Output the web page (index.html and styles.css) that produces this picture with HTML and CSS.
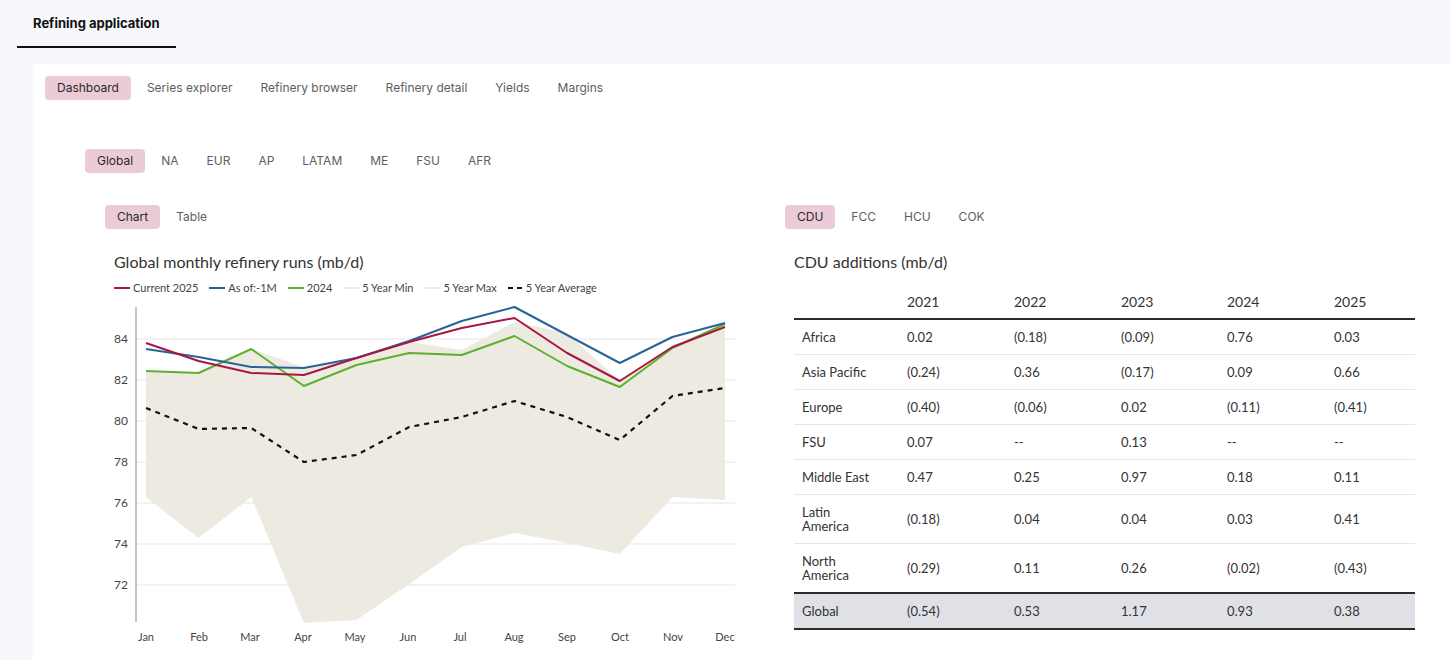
FILE: index.html
```html
<!DOCTYPE html>
<html>
<head>
  <meta charset="UTF-8">
  <title>Refining application</title>
  <link rel="stylesheet" href="styles.css">
</head>
<body>
  <div class="app-tabs">
    <div class="app-tab active">Refining application</div>
  </div>

  <div class="panel">
    <nav class="pills main-nav">
      <span class="pill active">Dashboard</span>
      <span class="pill">Series explorer</span>
      <span class="pill">Refinery browser</span>
      <span class="pill">Refinery detail</span>
      <span class="pill">Yields</span>
      <span class="pill">Margins</span>
    </nav>

    <nav class="pills region-nav">
      <span class="pill active">Global</span>
      <span class="pill">NA</span>
      <span class="pill">EUR</span>
      <span class="pill">AP</span>
      <span class="pill">LATAM</span>
      <span class="pill">ME</span>
      <span class="pill">FSU</span>
      <span class="pill">AFR</span>
    </nav>

    <div class="split">
      <section class="card">
        <nav class="pills">
          <span class="pill active">Chart</span>
          <span class="pill">Table</span>
        </nav>
        <h2 class="card-title">Global monthly refinery runs (mb/d)</h2>
        <div class="legend">
          <span class="key"><i class="swatch red"></i>Current 2025</span>
          <span class="key"><i class="swatch blue"></i>As of:-1M</span>
          <span class="key"><i class="swatch green"></i>2024</span>
          <span class="key"><i class="swatch beige"></i>5 Year Min</span>
          <span class="key"><i class="swatch beige"></i>5 Year Max</span>
          <span class="key"><i class="swatch dashed"></i>5 Year Average</span>
        </div>
        <svg class="chart" width="640" height="365" viewBox="105 295 640 365">
          <!-- grid -->
          <g class="grid">
            <line x1="136" x2="735" y1="339" y2="339"/>
            <line x1="136" x2="735" y1="380" y2="380"/>
            <line x1="136" x2="735" y1="421" y2="421"/>
            <line x1="136" x2="735" y1="462" y2="462"/>
            <line x1="136" x2="735" y1="503" y2="503"/>
            <line x1="136" x2="735" y1="544" y2="544"/>
            <line x1="136" x2="735" y1="585" y2="585"/>
          </g>
          <g class="y-labels">
            <text x="128" y="343">84</text>
            <text x="128" y="384">82</text>
            <text x="128" y="425">80</text>
            <text x="128" y="466">78</text>
            <text x="128" y="507">76</text>
            <text x="128" y="548">74</text>
            <text x="128" y="589">72</text>
          </g>

          <!-- 5 year min / max band -->
          <polygon class="band" points="146,371 198.6,372 251.3,349 303.9,367 356.5,358 409.2,342 461.8,350 514.5,322 567.1,333 619.8,381 672.4,347 725,323 725,500 672.4,497 619.8,554 567.1,543 514.5,533 461.8,547 409.2,584 356.5,620 303.9,623 251.3,497 198.6,538 146,497"/>

          <polyline class="series avg" points="146,408 198.6,429 251.3,428 303.9,462 356.5,455 409.2,427 461.8,417 514.5,401 567.1,417 619.8,440 672.4,396 725,388"/>
          <polyline class="series green" points="146,371 198.6,373 251.3,349 303.9,386 356.5,365 409.2,353 461.8,355 514.5,336 567.1,366 619.8,387 672.4,348 725,324"/>
          <polyline class="series blue" points="146,349 198.6,357 251.3,367 303.9,368 356.5,358 409.2,341 461.8,321 514.5,307 567.1,335 619.8,363 672.4,337 725,323"/>
          <polyline class="series red" points="146,343 198.6,361 251.3,373 303.9,375 356.5,358 409.2,342 461.8,328 514.5,318 567.1,353 619.8,381 672.4,347 725,327"/>

          <line class="axis" x1="136" x2="136" y1="307" y2="622"/>

          <g class="x-labels">
            <text x="146" y="641">Jan</text>
            <text x="199" y="641">Feb</text>
            <text x="250" y="641">Mar</text>
            <text x="303" y="641">Apr</text>
            <text x="355" y="641">May</text>
            <text x="408" y="641">Jun</text>
            <text x="460" y="641">Jul</text>
            <text x="514" y="641">Aug</text>
            <text x="567" y="641">Sep</text>
            <text x="620" y="641">Oct</text>
            <text x="673" y="641">Nov</text>
            <text x="725" y="641">Dec</text>
          </g>
        </svg>
      </section>

      <section class="card">
        <nav class="pills">
          <span class="pill active">CDU</span>
          <span class="pill">FCC</span>
          <span class="pill">HCU</span>
          <span class="pill">COK</span>
        </nav>
        <h2 class="card-title">CDU additions (mb/d)</h2>
        <table class="data-table">
          <colgroup>
            <col class="c-label">
            <col class="c-year">
            <col class="c-year">
            <col class="c-year-s">
            <col class="c-year">
            <col>
          </colgroup>
          <thead>
            <tr><th></th><th>2021</th><th>2022</th><th>2023</th><th>2024</th><th>2025</th></tr>
          </thead>
          <tbody>
            <tr><td>Africa</td><td>0.02</td><td>(0.18)</td><td>(0.09)</td><td>0.76</td><td>0.03</td></tr>
            <tr><td>Asia Pacific</td><td>(0.24)</td><td>0.36</td><td>(0.17)</td><td>0.09</td><td>0.66</td></tr>
            <tr><td>Europe</td><td>(0.40)</td><td>(0.06)</td><td>0.02</td><td>(0.11)</td><td>(0.41)</td></tr>
            <tr><td>FSU</td><td>0.07</td><td>--</td><td>0.13</td><td>--</td><td>--</td></tr>
            <tr><td>Middle East</td><td>0.47</td><td>0.25</td><td>0.97</td><td>0.18</td><td>0.11</td></tr>
            <tr><td>Latin America</td><td>(0.18)</td><td>0.04</td><td>0.04</td><td>0.03</td><td>0.41</td></tr>
            <tr><td>North America</td><td>(0.29)</td><td>0.11</td><td>0.26</td><td>(0.02)</td><td>(0.43)</td></tr>
          </tbody>
          <tfoot>
            <tr><td>Global</td><td>(0.54)</td><td>0.53</td><td>1.17</td><td>0.93</td><td>0.38</td></tr>
          </tfoot>
        </table>
      </section>
    </div>
  </div>
</body>
</html>
```

FILE: styles.css
```css
* {
  box-sizing: border-box;
  margin: 0;
  padding: 0;
}

body {
  font-family: Inter, 'Liberation Sans', sans-serif;
  background: #f7f8fc;
  color: #222;
  min-height: 660px;
}

.app-tabs {
  display: flex;
  padding-left: 17px;
  height: 48px;
}

.app-tab {
  padding: 15px 16px 0;
  font-size: 13px;
  font-weight: 700;
  color: #111;
  border-bottom: 2px solid #111;
}

.panel {
  margin: 16px 0 0 33px;
  background: #fff;
  padding: 12px 23px 40px 12px;
  min-height: 620px;
}

.pills {
  display: flex;
  gap: 4px;
}

.pill {
  padding: 4px 12px;
  font-size: 12px;
  line-height: 16px;
  color: #5e5e5e;
  border-radius: 4px;
}

.pill.active {
  background: #ebcbd6;
  color: #2a2a2a;
}

.region-nav {
  margin: 49px 0 0 40px;
}

.split {
  display: grid;
  grid-template-columns: 640px 1fr;
  gap: 40px;
  margin: 32px 0 0 60px;
}

.card-title {
  font-family: Lato, 'Open Sans', sans-serif;
  font-size: 16px;
  font-weight: 400;
  line-height: 20px;
  color: #333;
  margin: 23px 0 0 9px;
}

.legend {
  display: flex;
  gap: 11px;
  margin: 9px 0 0 9px;
  font-family: Lato, sans-serif;
  font-size: 11px;
  line-height: 14px;
  color: #444;
}

.key {
  display: flex;
  align-items: center;
  gap: 3px;
}

.swatch {
  display: inline-block;
  width: 16px;
  height: 2px;
}

.swatch.red { background: #a8173f; }
.swatch.blue { background: #2a6397; }
.swatch.green { background: #5cb02c; }
.swatch.beige { background: #edebe2; }

.swatch.dashed {
  width: 14px;
  margin-right: 1px;
  background: linear-gradient(90deg, #111 0 5px, transparent 5px 9px, #111 9px 14px);
}

.chart {
  display: block;
  font-family: Lato, sans-serif;
}

.grid line {
  stroke: #e6e6e6;
  stroke-width: 1;
}

.axis {
  stroke: #8a8a8a;
  stroke-width: 1;
}

.y-labels text {
  font-size: 12px;
  fill: #444;
  text-anchor: end;
}

.x-labels text {
  font-size: 11px;
  fill: #444;
  text-anchor: middle;
}

.band {
  fill: #edebe1;
}

.series {
  fill: none;
  stroke-width: 2;
  stroke-linejoin: round;
}

.series.red { stroke: #a8173f; }
.series.blue { stroke: #2a6397; }
.series.green { stroke: #5cb02c; }

.series.avg {
  stroke: #111;
  stroke-width: 2.2;
  stroke-dasharray: 5 5;
}

.data-table {
  width: 621px;
  margin: 13px 0 0 9px;
  border-collapse: collapse;
  table-layout: fixed;
  font-family: Lato, sans-serif;
  font-size: 13px;
  line-height: 14px;
  color: #333;
}

.c-label { width: 105px; }
.c-year { width: 107px; }
.c-year-s { width: 106px; }

.data-table th {
  font-size: 14px;
  font-weight: 400;
  line-height: 18px;
  text-align: left;
  padding: 8px 8px 7px;
  border-bottom: 2px solid #2b2b2b;
}

.data-table td {
  padding: 10px 8px;
  vertical-align: middle;
}

.data-table td:first-child {
  padding-right: 26px;
}

.data-table tbody tr + tr td {
  border-top: 1px solid #e7e7e7;
}

.data-table tfoot td {
  background: #e0e1e6;
  border-top: 2px solid #2b2b2b;
  border-bottom: 2px solid #2b2b2b;
}
```
